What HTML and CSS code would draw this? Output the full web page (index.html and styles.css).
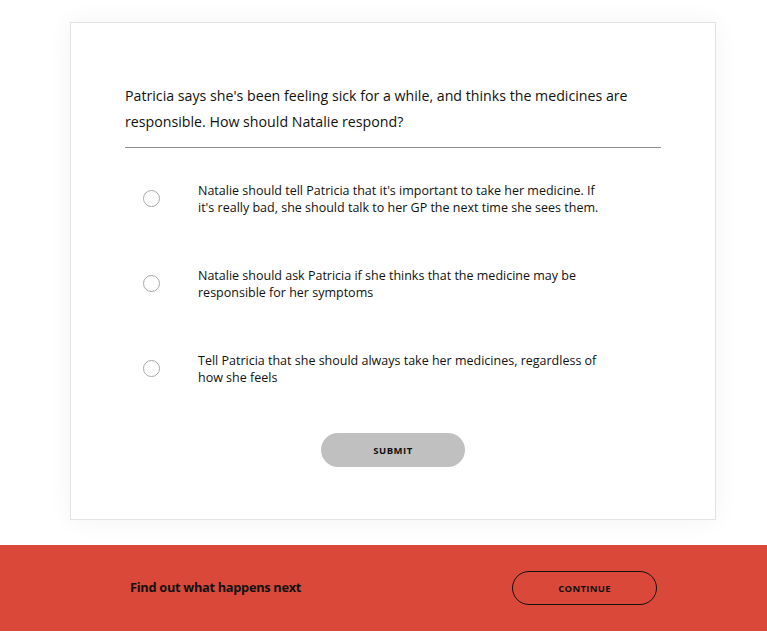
FILE: index.html
```html
<!DOCTYPE html>
<html lang="en">
<head>
    <meta charset="UTF-8">
    <meta name="viewport" content="width=device-width, initial-scale=1.0">
    <title>Question</title>
    <link rel="stylesheet" href="styles.css">
</head>
<body>

    <div class="card">
        <p class="question">Patricia says she's been feeling sick for a while, and thinks the medicines are responsible. How should Natalie respond?</p>

        <div class="options">
            <label class="option">
                <span class="radio"></span>
                <span class="option-text">Natalie should tell Patricia that it's important to take her medicine. If it's really bad, she should talk to her GP the next time she sees them.</span>
            </label>
            <label class="option">
                <span class="radio"></span>
                <span class="option-text">Natalie should ask Patricia if she thinks that the medicine may be responsible for her symptoms</span>
            </label>
            <label class="option">
                <span class="radio"></span>
                <span class="option-text">Tell Patricia that she should always take her medicines, regardless of how she feels</span>
            </label>
        </div>

        <button class="submit-btn">SUBMIT</button>
    </div>

    <div class="next-bar">
        <div class="next-text">Find out what happens next</div>
        <button class="continue-btn">CONTINUE</button>
    </div>

</body>
</html>
```

FILE: styles.css
```css
body {
    font-family: "Open Sans", Arial, sans-serif;
    background-color: white;
    color: #111;
    margin: 0;
    padding: 0;
}
.card {
    width: 646px;
    box-sizing: border-box;
    margin: 22px 0 0 70px;
    padding: 60px 54px 52px 54px;
    background: white;
    border: 1px solid #e2e2e2;
    box-shadow: 0 0 24px rgba(0,0,0,0.05);
}
.question {
    margin: 0;
    font-size: 14.2px;
    line-height: 26px;
    padding-bottom: 12px;
    border-bottom: 1px solid #8c8c8c;
}
.options {
    margin-top: 8px;
}
.option {
    display: flex;
    align-items: center;
    height: 85px;
    cursor: pointer;
}
.radio {
    flex: none;
    width: 15px;
    height: 15px;
    border: 1px solid #a8a8a8;
    border-radius: 50%;
    margin-left: 18px;
    margin-right: 38px;
}
.option-text {
    max-width: 412px;
    font-size: 12.5px;
    line-height: 17px;
}
.submit-btn {
    display: block;
    margin: 22px auto 0;
    width: 144px;
    height: 34px;
    border: none;
    border-radius: 17px;
    background-color: #c0c0c0;
    font-family: inherit;
    font-size: 9.5px;
    font-weight: bold;
    letter-spacing: 0.5px;
    color: #111;
    cursor: pointer;
}
.next-bar {
    margin-top: 25px;
    height: 86px;
    background-color: #d94839;
    display: flex;
    justify-content: space-between;
    align-items: center;
    padding: 0 110px 0 130px;
}
.next-text {
    font-size: 12.8px;
    font-weight: bold;
    color: #111;
    letter-spacing: -0.3px;
    margin-top: -3px;
}
.continue-btn {
    width: 145px;
    height: 34px;
    border: 1px solid #111;
    border-radius: 17px;
    background: none;
    font-family: inherit;
    font-size: 9.5px;
    font-weight: bold;
    letter-spacing: 0.3px;
    color: #111;
    cursor: pointer;
}
```
